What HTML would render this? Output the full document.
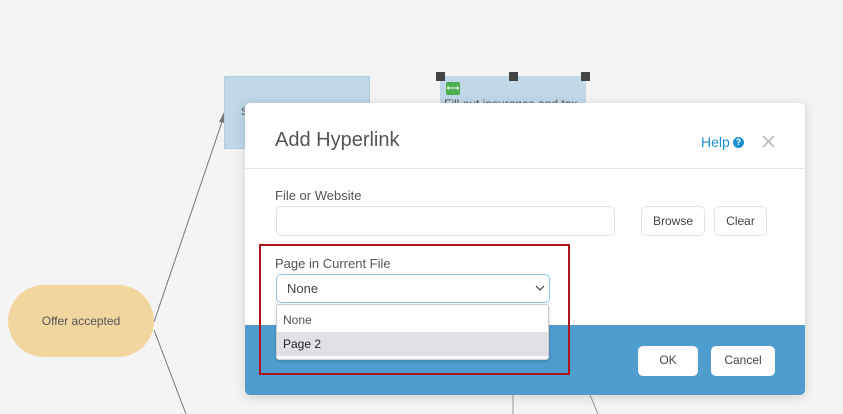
<!DOCTYPE html>
<html><head><meta charset="utf-8"><style>
body{margin:0;width:843px;height:414px;background:#f4f4f4;position:relative;overflow:hidden;font-family:"Liberation Sans",sans-serif}
.a{position:absolute}
.btn{position:absolute;background:#fff;border:1px solid #e2e2e2;border-radius:5px;font-size:12px;color:#444;text-align:center;box-sizing:border-box}
</style></head><body>
<svg class="a" style="left:0;top:0" width="843" height="414">
<line x1="154" y1="322" x2="224" y2="116" stroke="#777" stroke-width="1"/>
<polygon points="224,112 219,122 226,123" fill="#777"/>
<line x1="154" y1="330" x2="186" y2="414" stroke="#777"/>
<line x1="513" y1="395" x2="513" y2="414" stroke="#999"/>
<line x1="590" y1="395" x2="598" y2="414" stroke="#999"/>
</svg>
<div class="a" style="left:224px;top:76px;width:146px;height:73px;background:#c0d8e8;border:1px solid #b0cce0;box-sizing:border-box"></div>
<div class="a" style="left:241px;top:106px;font-size:11px;color:#555">S</div>
<div class="a" style="left:440px;top:76px;width:146px;height:40px;background:#c0d8e8"></div>
<div class="a" style="left:436px;top:72px;width:9px;height:9px;background:#444"></div>
<div class="a" style="left:509px;top:72px;width:9px;height:9px;background:#444"></div>
<div class="a" style="left:581px;top:72px;width:9px;height:9px;background:#444"></div>
<div class="a" style="left:446px;top:82px;width:14px;height:13px;background:#4caf50;border-radius:2px;color:#fff;font-size:9px;line-height:13px;text-align:center">⟷</div>
<div class="a" style="left:444px;top:97px;font-size:12px;color:#555">Fill out insurance and tax</div>
<div class="a" style="left:8px;top:285px;width:146px;height:72px;background:#f2d6a0;border-radius:36px;font-size:12px;color:#555;text-align:center;line-height:72px">Offer accepted</div>
<div class="a" style="left:245px;top:103px;width:560px;height:292px;background:#fff;border-radius:5px;box-shadow:0 2px 12px rgba(0,0,0,.15);overflow:hidden">
 <div class="a" style="left:30px;top:26px;font-size:20px;color:#555">Add Hyperlink</div>
 <div class="a" style="left:456px;top:31px;font-size:14px;color:#1a8fd0">Help</div>
 <div class="a" style="left:488px;top:34px;width:11px;height:11px;border-radius:50%;background:#1a8fd0;color:#fff;font-size:9px;font-weight:bold;text-align:center;line-height:11px">?</div>
 <svg class="a" style="left:517px;top:32px" width="13" height="13"><path d="M1 1L12 12M12 1L1 12" stroke="#bbb" stroke-width="1.6"/></svg>
 <div class="a" style="left:0;top:65px;width:560px;height:1px;background:#e8e8e8"></div>
 <div class="a" style="left:30px;top:85px;font-size:13px;color:#555">File or Website</div>
 <div class="a" style="left:31px;top:103px;width:339px;height:30px;border:1px solid #e2e2e2;border-radius:5px;box-sizing:border-box"></div>
 <div class="btn" style="left:396px;top:103px;width:64px;height:30px;line-height:28px">Browse</div>
 <div class="btn" style="left:469px;top:103px;width:53px;height:30px;line-height:28px">Clear</div>
 <div class="a" style="left:30px;top:153px;font-size:13px;color:#555">Page in Current File</div>
 <div class="a" style="left:31px;top:171px;width:274px;height:29px;border:1px solid #8cc4ec;border-radius:5px;box-sizing:border-box;font-size:13px;color:#444;line-height:27px;padding-left:10px">None</div>
 <svg class="a" style="left:290px;top:182px" width="10" height="7"><path d="M1 1L5 5L9 1" stroke="#555" fill="none" stroke-width="1.3"/></svg>
 <div class="a" style="left:0;top:222px;width:560px;height:70px;background:#4e9dce"></div>
 <div class="btn" style="left:393px;top:243px;width:60px;height:30px;line-height:28px;border:none">OK</div>
 <div class="btn" style="left:466px;top:243px;width:64px;height:30px;line-height:28px;border:none">Cancel</div>
</div>
<div class="a" style="left:276px;top:304px;width:273px;height:56px;background:#fff;border:1px solid #ccc;border-radius:3px;box-sizing:border-box;box-shadow:0 1px 3px rgba(0,0,0,.2)">
 <div style="height:27px;line-height:30px;padding-left:6px;font-size:12px;color:#555">None</div>
 <div style="height:24px;line-height:24px;padding-left:6px;font-size:12px;color:#222;background:#e0e0e6">Page 2</div>
</div>
<div class="a" style="left:259px;top:244px;width:311px;height:131px;border:2px solid #b01418;box-sizing:border-box"></div>
</body></html>
